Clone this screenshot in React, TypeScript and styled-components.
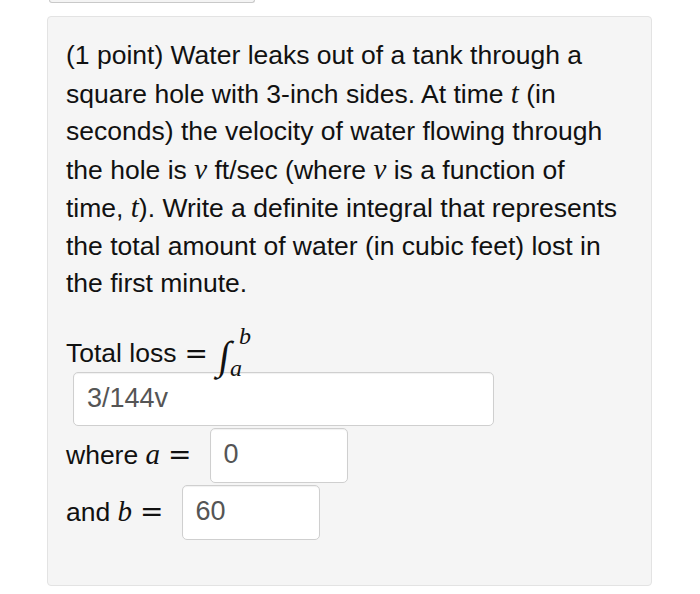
import React from "react";
import styled, { createGlobalStyle } from "styled-components";

const Global = createGlobalStyle`
  html, body { margin: 0; padding: 0; background: #ffffff; }
  body { font-family: "Liberation Sans", Arial, Helvetica, sans-serif; color: #111; }
`;

const Page = styled.div`
  width: 700px;
  height: 594px;
  padding: 0 48px 0 47px;
  box-sizing: border-box;
  display: flex;
  flex-direction: column;
  overflow: hidden;
`;

const ButtonStub = styled.div`
  width: 206px;
  height: 3px;
  margin-left: 2px;
  box-sizing: border-box;
  border: 1px solid #c9c9c9;
  border-top: none;
  border-radius: 0 0 4px 4px;
  background: #f4f4f4;
`;

const Card = styled.div`
  margin-top: 13px;
  height: 570px;
  box-sizing: border-box;
  background: #f5f5f5;
  border: 1px solid #e3e3e3;
  border-radius: 4px;
  padding: 20px 10px 0 18px;
  font-size: 26.5px;
  line-height: 37.5px;
`;

const Problem = styled.p`
  margin: 0;
  white-space: nowrap;
`;

const MathVar = styled.span`
  font-family: "Liberation Serif", "Times New Roman", serif;
  font-style: italic;
  font-size: 29px;
`;

const MathEq = styled.span`
  font-family: "DejaVu Sans", sans-serif;
  font-size: 28px;
  margin: 0 11px 0 8px;
`;

const TotalLine = styled.div`
  margin-top: 33px;
  height: 36px;
  display: flex;
  align-items: center;
`;

const Integral = styled.span`
  display: inline-flex;
  align-items: center;
  font-family: "Liberation Serif", "Times New Roman", serif;
  font-style: italic;
`;

const IntSign = styled.span`
  font-size: 40px;
  line-height: 1;
  transform: translateY(2px) skewX(-8deg);
`;

const Limits = styled.span`
  display: inline-flex;
  flex-direction: column;
  font-size: 24px;
  line-height: 18px;
`;

const Upper = styled.span`
  margin-left: 9px;
  transform: translateY(-9px);
`;

const Lower = styled.span`
  transform: translateY(5px);
`;

const Field = styled.div<{ $w: number; $h?: number }>`
  width: ${(p) => p.$w}px;
  height: ${(p) => p.$h ?? 55}px;
  box-sizing: border-box;
  background: #ffffff;
  border: 1px solid #cfcfcf;
  border-radius: 5px;
  box-shadow: inset 0 1px 1px rgba(0, 0, 0, 0.06);
  padding-left: 13px;
  display: flex;
  align-items: center;
  color: #555555;
  font-size: 27px;
`;

const WideField = styled(Field)`
  margin-left: 7px;
`;

const Row = styled.div`
  margin-top: 2px;
  display: flex;
  align-items: center;
  height: 55px;
`;

const Label = styled.span`
  display: inline-flex;
  align-items: baseline;
  margin-right: 7px;
`;

export default function App() {
  return (
    <>
      <Global />
      <Page>
        <ButtonStub />
        <Card>
          <Problem>
            (1 point) Water leaks out of a tank through a
            <br />
            square hole with 3-inch sides. At time <MathVar>t</MathVar> (in
            <br />
            seconds) the velocity of water flowing through
            <br />
            the hole is <MathVar>v</MathVar> ft/sec (where <MathVar>v</MathVar> is a function of
            <br />
            time, <MathVar>t</MathVar>). Write a definite integral that represents
            <br />
            the total amount of water (in cubic feet) lost in
            <br />
            the first minute.
          </Problem>
          <TotalLine>
            Total loss
            <MathEq>=</MathEq>
            <Integral>
              <IntSign>∫</IntSign>
              <Limits>
                <Upper>b</Upper>
                <Lower>a</Lower>
              </Limits>
            </Integral>
          </TotalLine>
          <WideField $w={421} $h={54}>
            3/144v
          </WideField>
          <Row>
            <Label>
              where&nbsp;<MathVar>a</MathVar>
              <MathEq>=</MathEq>
            </Label>
            <Field $w={138}>0</Field>
          </Row>
          <Row>
            <Label>
              and&nbsp;<MathVar>b</MathVar>
              <MathEq>=</MathEq>
            </Label>
            <Field $w={138}>60</Field>
          </Row>
        </Card>
      </Page>
    </>
  );
}
